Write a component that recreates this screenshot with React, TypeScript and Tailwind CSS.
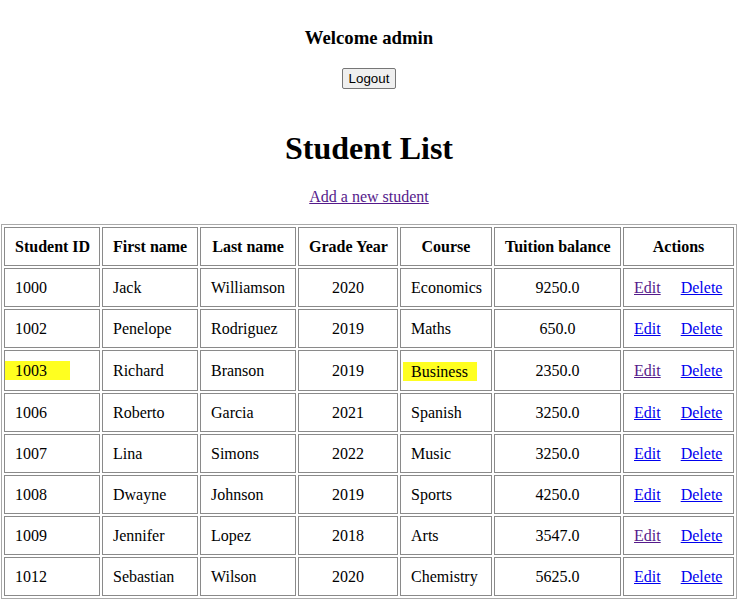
import React from "react"

type Student = {
    id: string
    first: string
    last: string
    year: string
    course: string
    balance: string
    visited: boolean
    mark?: boolean
}

const students: Student[] = [
    { id: "1000", first: "Jack", last: "Williamson", year: "2020", course: "Economics", balance: "9250.0", visited: true },
    { id: "1002", first: "Penelope", last: "Rodriguez", year: "2019", course: "Maths", balance: "650.0", visited: false },
    { id: "1003", first: "Richard", last: "Branson", year: "2019", course: "Business", balance: "2350.0", visited: true, mark: true },
    { id: "1006", first: "Roberto", last: "Garcia", year: "2021", course: "Spanish", balance: "3250.0", visited: false },
    { id: "1007", first: "Lina", last: "Simons", year: "2022", course: "Music", balance: "3250.0", visited: false },
    { id: "1008", first: "Dwayne", last: "Johnson", year: "2019", course: "Sports", balance: "4250.0", visited: false },
    { id: "1009", first: "Jennifer", last: "Lopez", year: "2018", course: "Arts", balance: "3547.0", visited: true },
    { id: "1012", first: "Sebastian", last: "Wilson", year: "2020", course: "Chemistry", balance: "5625.0", visited: false },
]

const cell = "border border-[#8a8a8a] px-[10px] py-[10px] leading-[17px] whitespace-nowrap"
const head = `${cell} px-[6px] font-bold`

export default function App() {
    return (
        <div className="min-h-[609px] w-[738px] bg-white text-black font-['Liberation_Serif',serif] text-[16px]">
            <div className="flex flex-col items-center pt-[27px]">
                <h3 className="text-[18.72px] font-bold leading-[22px]">Welcome admin</h3>
                <button
                    type="button"
                    className="mt-[19px] h-[21px] rounded-[2px] border border-[#767676] bg-[#efefef] px-[6px] font-['Liberation_Sans',Arial,sans-serif] text-[13.33px] leading-[19px]"
                >
                    Logout
                </button>
                <h1 className="mt-[41px] text-[32px] font-bold leading-[37px]">Student List</h1>
                <a href="#" className="mt-[21px] leading-[18px] text-[#551a8b] underline">
                    Add a new student
                </a>
            </div>

            <table className="mt-[18px] ml-[1px] w-[736px] table-fixed border-separate border-spacing-[2px] border border-[#a9a9a9]">
                <thead>
                    <tr>
                        <th className={`${head} w-[96px]`}>Student ID</th>
                        <th className={`${head} w-[96px]`}>First name</th>
                        <th className={`${head} w-[96px]`}>Last name</th>
                        <th className={`${head} w-[100px]`}>Grade Year</th>
                        <th className={`${head} w-[92px]`}>Course</th>
                        <th className={`${head} w-[127px]`}>Tuition balance</th>
                        <th className={head}>Actions</th>
                    </tr>
                </thead>
                <tbody>
                    {students.map((s) => (
                        <tr key={s.id}>
                            <td className={cell}>
                                {s.mark ? (
                                    <span className="-ml-[10px] inline-block bg-[#ffff20] py-[1px] pl-[10px] pr-[23px]">
                                        {s.id}
                                    </span>
                                ) : (
                                    s.id
                                )}
                            </td>
                            <td className={cell}>{s.first}</td>
                            <td className={cell}>{s.last}</td>
                            <td className={`${cell} text-center`}>{s.year}</td>
                            <td className={cell}>
                                {s.mark ? (
                                    <span className="-ml-[8px] inline-block translate-y-[1px] bg-[#ffff20] py-[1px] pl-[8px] pr-[9px]">
                                        {s.course}
                                    </span>
                                ) : (
                                    s.course
                                )}
                            </td>
                            <td className={`${cell} text-center`}>{s.balance}</td>
                            <td className={cell}>
                                <a href="#" className={`underline ${s.visited ? "text-[#551a8b]" : "text-[#0000ee]"}`}>
                                    Edit
                                </a>
                                <a href="#" className="ml-[20px] text-[#0000ee] underline">
                                    Delete
                                </a>
                            </td>
                        </tr>
                    ))}
                </tbody>
            </table>
        </div>
    )
}
